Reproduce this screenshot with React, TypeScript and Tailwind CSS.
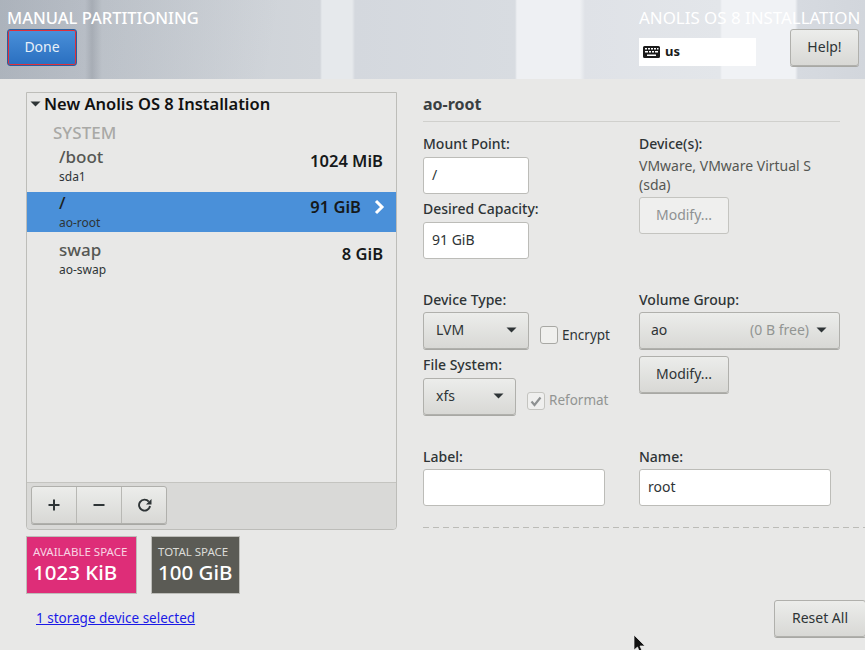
import React from "react";

const btn = "flex items-center rounded-[3px] border border-[#b0b0ac] bg-[linear-gradient(#ecedeb,#d8d8d5)] shadow-[0_1px_0_#a8a8a4] text-[#2e3436]";
const input = "flex items-center rounded-[3px] border border-[#bcbcb8] bg-white h-[37px] px-[8px] pb-[2px] text-[14px] text-[#2e3436]";
const lbl = "text-[14px] leading-[18px] font-medium text-[#2e3436]";

function Caret({ className = "" }: { className?: string }) {
  return (
    <svg width="11" height="6" viewBox="0 0 11 6" className={className}>
      <path d="M0.5 0.5h10L5.5 5.5z" fill="#2e3436" />
    </svg>
  );
}

function Row({ name, dev, size, selected }: { name: string; dev: string; size: string; selected?: boolean }) {
  return (
    <div className={`flex h-[40px] items-center pl-[32px] pr-[13px] ${selected ? "bg-[#4a90d9]" : ""}`}>
      <div className="flex-1 flex flex-col">
        <div className={`text-[17px] leading-[20px] font-medium ${selected ? "text-[#1c1f20]" : "text-[#555753]"}`}>{name}</div>
        <div className="text-[12px] leading-[16px] mt-[2px] text-[#2e3436]">{dev}</div>
      </div>
      <div className="text-[16.500px] font-semibold text-[#16191a] mb-[10px]">{size}</div>
      {selected && (
        <svg width="12" height="16" viewBox="0 0 12 16" className="ml-[12px] -mr-[2px] mb-[10px]">
          <path d="M3 2l6 6-6 6" fill="none" stroke="white" strokeWidth="3" />
        </svg>
      )}
    </div>
  );
}

export default function App() {
  return (
    <div className="relative w-[865px] h-[650px] overflow-hidden bg-[#e8e8e7] font-['Noto_Sans','Open_Sans',sans-serif]">
      <header className="flex justify-between h-[79px] bg-[linear-gradient(100deg,rgba(100,110,125,0.22),rgba(100,110,125,0)_32%),linear-gradient(90deg,#c0c6cd_0,#c6cbd2_85px,#b2b7be_92px,#c9ced4_102px,#d2d6db_320px,#e6e9ec_322px,#e6e9ec_352px,#d4d8de_355px,#d8dce1_515px,#eef0f3_517px,#eef0f3_580px,#dfe2e7_585px,#e3e6ea_720px,#f0f2f5_722px,#f0f2f5_795px,#d6dae0_798px,#d2d6dc_865px)]">
        <div className="pl-[7px] pt-[9px]">
          <div className="text-[16.500px] leading-[18px] font-medium text-white whitespace-nowrap">MANUAL PARTITIONING</div>
          <button className="flex items-center justify-center pb-[2px] mt-[2px] w-[70px] h-[37px] rounded-[3px] border border-[#2a5f9f] bg-[linear-gradient(#4a90d9,#2a6fc0)] text-[14px] text-[#e8f0f8] shadow-[inset_0_0_0_1px_#e0303a]">
            Done
          </button>
        </div>
        <div className="w-[226px] shrink-0">
          <div className="pt-[9px] text-[16.900px] leading-[18px] text-white whitespace-nowrap">ANOLIS OS 8 INSTALLATION</div>
          <div className="flex items-start mt-[2px] pr-[6px]">
            <div className="flex items-center mt-[9px] w-[117px] h-[28px] bg-white pl-[4px]">
              <svg width="17" height="12" viewBox="0 0 17 12" fill="#1a1a1a">
                <path fillRule="evenodd" d="M1.5 0h14A1.5 1.5 0 0 1 17 1.5v9a1.5 1.5 0 0 1-1.5 1.5h-14A1.5 1.5 0 0 1 0 10.500v-9A1.5 1.500 0 0 1 1.500 0zM2 2v1.500h2V2zm3 0v1.500h2V2zm3 0v1.500h2V2zm3 0v1.500h2V2zm3 0v1.500h1.500V2zM2 5v1.500h3V5zm4 0v1.500h2V5zm3 0v1.500h2V5zm3 0v1.500h3V5zM4 8.500V10h9V8.500z" />
              </svg>
              <span className="ml-[5px] text-[13px] font-bold text-[#1a1a1a]">us</span>
            </div>
            <div className="flex-1" />
            <div className={`${btn} justify-center pb-[3px] w-[69px] h-[37px] text-[14px]`}>Help!</div>
          </div>
        </div>
      </header>

      <main className="flex pl-[26px] pt-[13px]">
        <div className="w-[371px] shrink-0">
          <div className="h-[438px] flex flex-col rounded-b-[4px] border border-[#bdbdb9] bg-[#e8e8e7]">
            <div className="flex-1">
              <div className="flex items-center h-[22px] pl-[3px]">
                <Caret />
                <span className="ml-[3px] text-[16.500px] font-semibold text-[#111] whitespace-nowrap">New Anolis OS 8 Installation</span>
              </div>
              <div className="pl-[26px] mt-[8px] text-[17px] leading-[20px] font-medium text-[#a9a9a6]">SYSTEM</div>
              <div className="mt-[3px]">
                <Row name="/boot" dev="sda1" size="1024 MiB" />
                <div className="h-[6px]" />
                <Row name="/" dev="ao-root" size="91 GiB" selected />
                <div className="h-[7px]" />
                <Row name="swap" dev="ao-swap" size="8 GiB" />
              </div>
            </div>
            <div className="flex items-center h-[47px] pb-[2px] border-t border-[#c4c4c0] bg-[#d9d9d7] pl-[4px] rounded-b-[4px]">
              <div className="flex rounded-[3px] border border-[#b0b0ac] bg-[linear-gradient(#ecedeb,#d8d8d5)] shadow-[0_1px_0_#a8a8a4] h-[38px] text-[#2e3436]">
                <div className="w-[45px] flex items-center justify-center border-r border-[#b8b8b4]">
                  <svg width="12" height="12" viewBox="0 0 12 12"><path d="M6 0.500v11M0.500 6h11" stroke="#2e3436" strokeWidth="2" /></svg>
                </div>
                <div className="w-[45px] flex items-center justify-center border-r border-[#b8b8b4]">
                  <svg width="12" height="12" viewBox="0 0 12 12"><path d="M0.500 6h11" stroke="#2e3436" strokeWidth="2" /></svg>
                </div>
                <div className="w-[44px] flex items-center justify-center">
                  <svg width="15" height="15" viewBox="0 0 15 15" fill="none">
                    <path d="M11.800 3.600A5.500 5.500 0 1 0 13 8" stroke="#2e3436" strokeWidth="1.900" />
                    <path d="M14.500 1v5.500H9z" fill="#2e3436" />
                  </svg>
                </div>
              </div>
            </div>
          </div>
          <div className="flex mt-[6px] gap-[14px]">
            <div className="w-[111px] h-[58px] border border-[#bdbdb9] bg-[#de2d78] text-white pl-[6px] pt-[7px]">
              <div className="text-[11.500px] leading-[16px] text-[#f8d5e4] whitespace-nowrap">AVAILABLE SPACE</div>
              <div className="text-[20.500px] leading-[25px] font-medium whitespace-nowrap">1023 KiB</div>
            </div>
            <div className="w-[89px] h-[58px] border border-[#bdbdb9] bg-[#5b5b55] text-white pl-[6px] pt-[7px]">
              <div className="text-[11.500px] leading-[16px] text-[#dcdcd8] whitespace-nowrap">TOTAL SPACE</div>
              <div className="text-[20.500px] leading-[25px] font-medium whitespace-nowrap">100 GiB</div>
            </div>
          </div>
          <div className="ml-[10px] mt-[15px] text-[13.500px] leading-[18px] text-[#1a1ae6] underline whitespace-nowrap">1 storage device selected</div>
        </div>

        <div className="ml-[26px] flex-1 min-w-0">
          <div className="w-[417px] h-[17px] flex items-center mt-[3px] text-[16px] font-bold text-[#3a3f41]">ao-root</div>
          <div className="w-[417px] h-px mt-[9px] bg-[#d0d0cd]" />
          <div className="grid grid-cols-[216px_1fr] mt-[13px]">
            <div>
              <div className={lbl}>Mount Point:</div>
              <div className={`${input} w-[106px] mt-[4px]`}>/</div>
              <div className={`${lbl} mt-[6px]`}>Desired Capacity:</div>
              <div className={`${input} w-[106px] mt-[4px]`}>91 GiB</div>
            </div>
            <div>
              <div className={lbl}>Device(s):</div>
              <div className="mt-[3px] text-[14px] leading-[19px] text-[#555753] whitespace-nowrap">VMware, VMware Virtual S</div>
              <div className="text-[14px] leading-[19px] text-[#555753]">(sda)</div>
              <div className="mt-[3px] pb-[2px] w-[90px] h-[37px] flex items-center justify-center rounded-[3px] border border-[#c4c4c0] bg-[#efefee] text-[14px] text-[#8e9192]">Modify...</div>
            </div>
          </div>
          <div className="grid grid-cols-[216px_1fr] mt-[32px]">
            <div>
              <div className={lbl}>Device Type:</div>
              <div className="flex items-start mt-[3px]">
                <div className={`${btn} w-[106px] h-[37px] justify-between pb-[2px] pl-[12px] pr-[11px] text-[14px]`}>
                  <span>LVM</span><Caret />
                </div>
                <div className="ml-[11px] mt-[14px] w-[18px] h-[18px] rounded-[3px] border border-[#a8a8a4] bg-[#f0f0ee]" />
                <span className="ml-[4px] mt-[13px] text-[13.500px] text-[#2e3436]">Encrypt</span>
              </div>
              <div className={`${lbl} mt-[7px]`}>File System:</div>
              <div className="flex items-start mt-[4px]">
                <div className={`${btn} w-[93px] h-[37px] justify-between pb-[2px] pl-[12px] pr-[11px] text-[14px]`}>
                  <span>xfs</span><Caret />
                </div>
                <div className="ml-[11px] mt-[14px] w-[18px] h-[18px] flex items-center justify-center rounded-[3px] border border-[#c4c4c0] bg-[#efefee]">
                  <svg width="12" height="11" viewBox="0 0 12 11"><path d="M1.500 5.500l3 3.500 6-7.500" fill="none" stroke="#8e9192" strokeWidth="2.200" /></svg>
                </div>
                <span className="ml-[4px] mt-[12px] text-[13.500px] text-[#929593]">Reformat</span>
              </div>
            </div>
            <div>
              <div className={lbl}>Volume Group:</div>
              <div className={`${btn} mt-[3px] w-[201px] h-[37px] pb-[2px] pl-[11px] pr-[12px] text-[14px]`}>
                <span>ao</span>
                <span className="ml-auto text-[#929593]">(0 B free)</span>
                <Caret className="ml-[7px]" />
              </div>
              <div className={`${btn} justify-center pb-[2px] mt-[7px] w-[90px] h-[37px] text-[14px]`}>Modify...</div>
            </div>
          </div>
          <div className="grid grid-cols-[216px_1fr] mt-[32px]">
            <div>
              <div className={`${lbl} translate-y-[1px]`}>Label:</div>
              <div className={`${input} w-[182px] mt-[4px]`} />
            </div>
            <div>
              <div className={`${lbl} translate-y-[1px]`}>Name:</div>
              <div className={`${input} w-[192px] mt-[4px]`}>root</div>
            </div>
          </div>
          <div className="mt-[21px] h-px -mr-px bg-[repeating-linear-gradient(90deg,#bcbcb8_0,#bcbcb8_6px,transparent_6px,transparent_10px)]" />
          <div className="flex justify-end mt-[72px]">
            <div className={`${btn} justify-center pb-[2px] w-[92px] h-[37px] text-[14px] -mr-[1px]`}>Reset All</div>
          </div>
        </div>
      </main>

      <svg width="14" height="20" viewBox="0 0 14 20" className="absolute left-[633px] top-[634px]">
        <path d="M1 1v15l3.500-3 2.500 6 2.500-1-2.500-6h5z" fill="#111" stroke="#eee" strokeWidth="0.700" />
      </svg>
    </div>
  );
}
